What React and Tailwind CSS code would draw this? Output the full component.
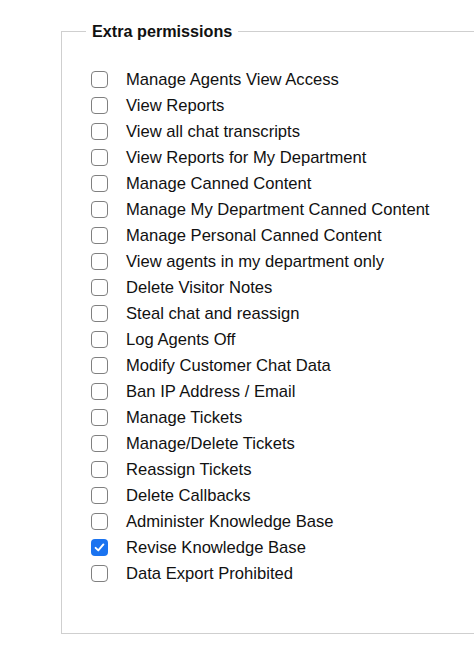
import React from "react";

const items = [
  "Manage Agents View Access",
  "View Reports",
  "View all chat transcripts",
  "View Reports for My Department",
  "Manage Canned Content",
  "Manage My Department Canned Content",
  "Manage Personal Canned Content",
  "View agents in my department only",
  "Delete Visitor Notes",
  "Steal chat and reassign",
  "Log Agents Off",
  "Modify Customer Chat Data",
  "Ban IP Address / Email",
  "Manage Tickets",
  "Manage/Delete Tickets",
  "Reassign Tickets",
  "Delete Callbacks",
  "Administer Knowledge Base",
  "Revise Knowledge Base",
  "Data Export Prohibited",
];

function Box({ checked }) {
  if (checked) {
    return (
      <span className="flex h-[17px] w-[17px] shrink-0 items-center justify-center rounded-[4px] bg-[#1a73f0]">
        <svg viewBox="0 0 16 16" className="h-[13px] w-[13px]" fill="none">
          <path d="M3.2 8.4 L6.5 11.6 L12.8 4.2" stroke="#fff" strokeWidth="2.4" strokeLinecap="round" strokeLinejoin="round" />
        </svg>
      </span>
    );
  }
  return <span className="block h-[17px] w-[17px] shrink-0 rounded-[4px] border-[1.6px] border-[#808080] bg-white" />;
}

export default function App() {
  return (
    <div className="h-[658px] w-[474px] overflow-hidden bg-white" style={{ fontFamily: '"Liberation Sans", Arial, sans-serif' }}>
      <fieldset className="ml-[61px] mt-[22px] w-[460px] border border-[#cfcfcf] p-0 pb-[47px]">
        <legend className="ml-[24px] px-[6px] text-[16.2px] font-bold leading-[19px] text-[#111]">Extra permissions</legend>
        <div className="mt-[25px] flex flex-col pl-[29px]">
          {items.map((t) => (
            <label key={t} className="flex h-[26px] items-center gap-[18px]">
              <Box checked={t === "Revise Knowledge Base"} />
              <span className="pt-[2px] text-[16.6px] leading-[20px] text-[#111]">{t}</span>
            </label>
          ))}
        </div>
      </fieldset>
    </div>
  );
}
